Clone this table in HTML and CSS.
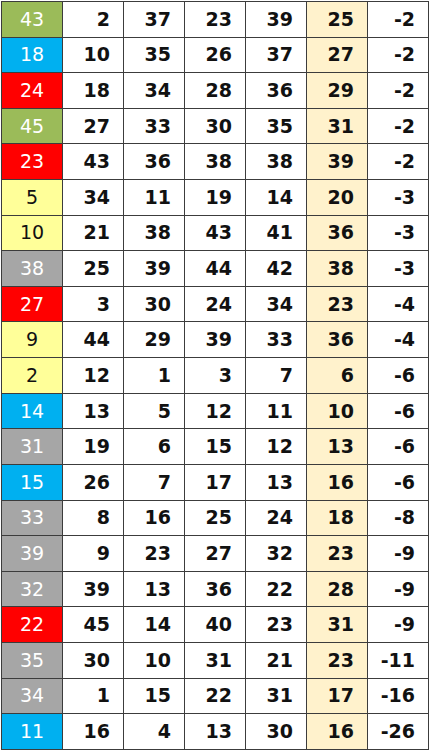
FILE: index.html
```
<!DOCTYPE html>
<html>
<head>
<meta charset="utf-8">
<link rel="stylesheet" href="styles.css">
</head>
<body>
<table class="grid">
<colgroup><col><col><col><col><col><col class="hl"><col></colgroup>
<tbody>
<tr><td class="k green">43</td><td>2</td><td>37</td><td>23</td><td>39</td><td class="t">25</td><td>-2</td></tr>
<tr><td class="k blue">18</td><td>10</td><td>35</td><td>26</td><td>37</td><td class="t">27</td><td>-2</td></tr>
<tr><td class="k red">24</td><td>18</td><td>34</td><td>28</td><td>36</td><td class="t">29</td><td>-2</td></tr>
<tr><td class="k green">45</td><td>27</td><td>33</td><td>30</td><td>35</td><td class="t">31</td><td>-2</td></tr>
<tr><td class="k red">23</td><td>43</td><td>36</td><td>38</td><td>38</td><td class="t">39</td><td>-2</td></tr>
<tr><td class="k yellow">5</td><td>34</td><td>11</td><td>19</td><td>14</td><td class="t">20</td><td>-3</td></tr>
<tr><td class="k yellow">10</td><td>21</td><td>38</td><td>43</td><td>41</td><td class="t">36</td><td>-3</td></tr>
<tr><td class="k gray">38</td><td>25</td><td>39</td><td>44</td><td>42</td><td class="t">38</td><td>-3</td></tr>
<tr><td class="k red">27</td><td>3</td><td>30</td><td>24</td><td>34</td><td class="t">23</td><td>-4</td></tr>
<tr><td class="k yellow">9</td><td>44</td><td>29</td><td>39</td><td>33</td><td class="t">36</td><td>-4</td></tr>
<tr><td class="k yellow">2</td><td>12</td><td>1</td><td>3</td><td>7</td><td class="t">6</td><td>-6</td></tr>
<tr><td class="k blue">14</td><td>13</td><td>5</td><td>12</td><td>11</td><td class="t">10</td><td>-6</td></tr>
<tr><td class="k gray">31</td><td>19</td><td>6</td><td>15</td><td>12</td><td class="t">13</td><td>-6</td></tr>
<tr><td class="k blue">15</td><td>26</td><td>7</td><td>17</td><td>13</td><td class="t">16</td><td>-6</td></tr>
<tr><td class="k gray">33</td><td>8</td><td>16</td><td>25</td><td>24</td><td class="t">18</td><td>-8</td></tr>
<tr><td class="k gray">39</td><td>9</td><td>23</td><td>27</td><td>32</td><td class="t">23</td><td>-9</td></tr>
<tr><td class="k gray">32</td><td>39</td><td>13</td><td>36</td><td>22</td><td class="t">28</td><td>-9</td></tr>
<tr><td class="k red">22</td><td>45</td><td>14</td><td>40</td><td>23</td><td class="t">31</td><td>-9</td></tr>
<tr><td class="k gray">35</td><td>30</td><td>10</td><td>31</td><td>21</td><td class="t">23</td><td>-11</td></tr>
<tr><td class="k gray">34</td><td>1</td><td>15</td><td>22</td><td>31</td><td class="t">17</td><td>-16</td></tr>
<tr><td class="k blue">11</td><td>16</td><td>4</td><td>13</td><td>30</td><td class="t">16</td><td>-26</td></tr>
</tbody>
</table>
</body>
</html>
```
FILE: styles.css
```
html, body {
  margin: 0;
  padding: 0;
  background: #ffffff;
}
body {
  padding: 1px 0 0 1px;
}
.grid {
  border-collapse: collapse;
  table-layout: fixed;
  width: 428px;
  height: 749px;
  font-family: "DejaVu Sans", Verdana, sans-serif;
  font-size: 19px;
  color: #111111;
}
.grid col {
  width: 61px;
}
.grid td {
  border: 1px solid #3c3c3c;
  padding: 0 13px 0 0;
  text-align: right;
  font-weight: bold;
  vertical-align: middle;
  line-height: 1;
  white-space: nowrap;
}
.grid td.t {
  background: #fff2cc;
}
.grid td.k {
  text-align: center;
  font-weight: normal;
  padding: 0;
  color: #ffffff;
}
.grid td.green { background: #9bbb59; }
.grid td.blue { background: #00b0f0; }
.grid td.red { background: #ff0000; }
.grid td.gray { background: #a6a6a6; }
.grid td.yellow { background: #ffff99; color: #111111; }
```
